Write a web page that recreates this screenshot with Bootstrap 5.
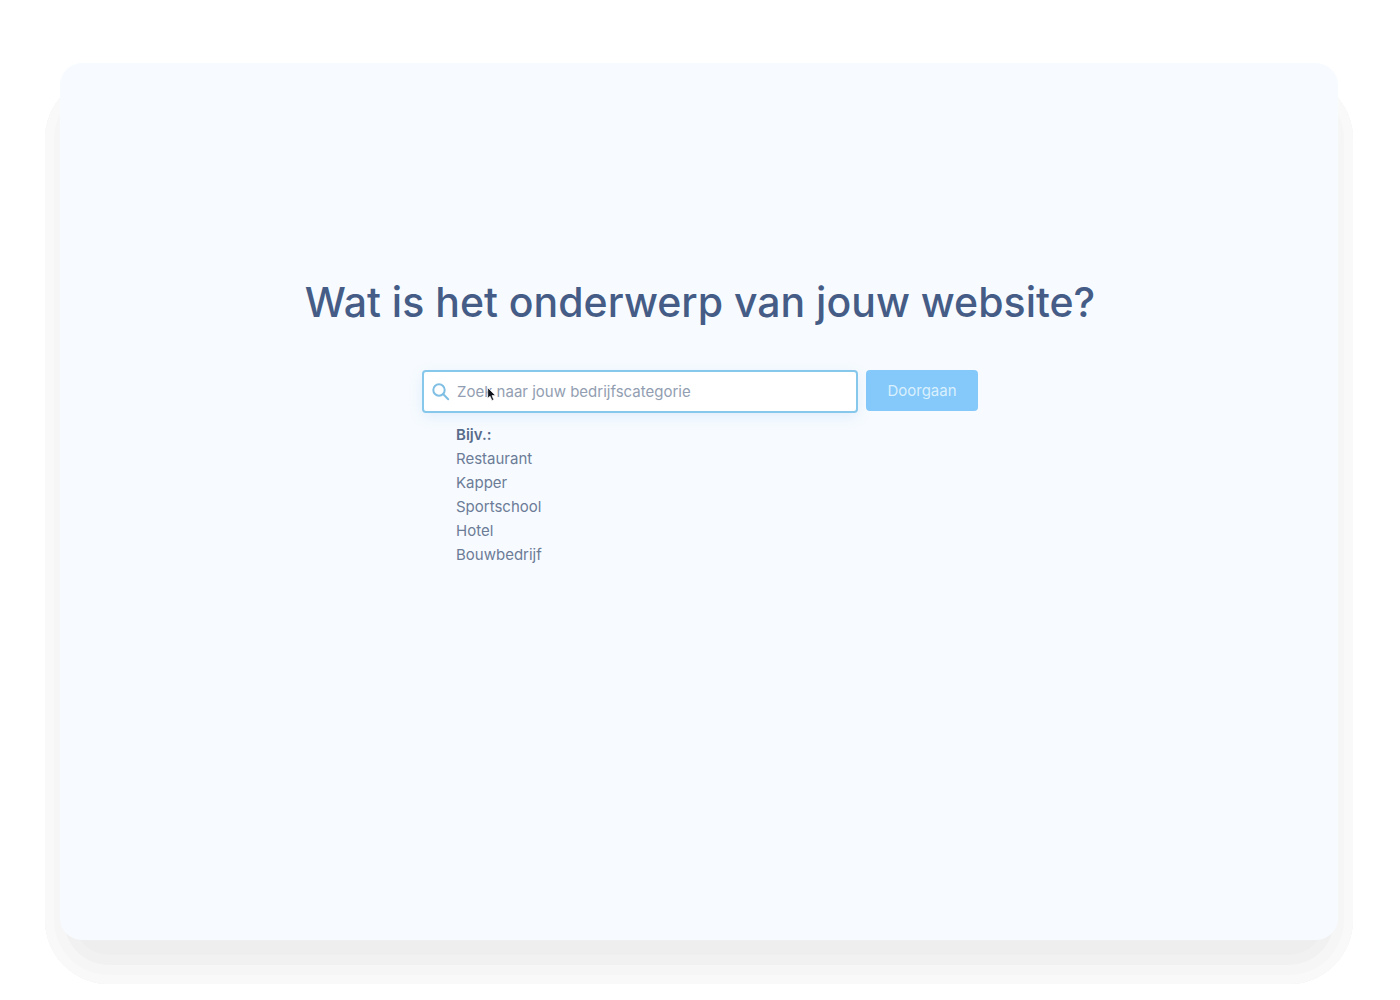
<!DOCTYPE html>
<html lang="nl">
<head>
<meta charset="utf-8">
<meta name="viewport" content="width=device-width, initial-scale=1">
<title>Wat is het onderwerp van jouw website?</title>
<link rel="stylesheet" href="https://cdn.jsdelivr.net/npm/bootstrap@5.3.0/dist/css/bootstrap.min.css">
<style>
body { font-family: Inter, "Liberation Sans", sans-serif; font-size: 15px; background: #fff; color: #6c7c97; }
.page-wrap { padding: 63px 62px 60px 60px; }
.panel { isolation: isolate; min-height: calc(100vh - 123px); }
/* stepped shadow below the panel */
.panel::before {
  content: ""; position: absolute; z-index: -2; inset: 12px -15px -44px; border-radius: 64px; background: #eee;
  box-shadow: inset 0 0 0 9px #f9f9f9, inset 0 0 0 19px #f6f6f6, inset 0 0 0 29px #f1f1f1;
}
.panel::after { content: ""; position: absolute; z-index: -1; inset: 0; border-radius: 22px; background: #f7fbff; }
.panel-inner { padding: 212px 14px 0 16px; }
h1 { font-size: 41px; line-height: 54px; font-weight: 500; color: #455d86; margin-bottom: 41px; }
.search-area { max-width: 556px; }
.search-box { height: 43px; border: 2px solid #86c7ec; border-radius: 4px; background: #fff; box-shadow: 0 4px 14px rgba(120, 170, 225, .16); padding-left: 8px; }
.search-box .form-control { font-size: 15px; color: #8d99ad; padding: 2px 7px 0; }
.search-box .form-control::placeholder { color: #929eb1; opacity: 1; }
.btn-go, .btn-go:hover { width: 112px; height: 41px; padding: 2px 0 0; font-size: 15px; color: #d9f0fd; background: #85c8fa; border: 0; border-radius: 4px; }
.pointer { left: 63px; top: 15px; pointer-events: none; }
.examples { padding: 10px 0 0 34px; line-height: 24px; }
.examples h2 { font-size: 15px; line-height: 24px; font-weight: 600; color: #596b8b; }
</style>
<script src="https://cdn.jsdelivr.net/npm/bootstrap@5.3.0/dist/js/bootstrap.bundle.min.js"></script>
</head>
<body>
<div class="page-wrap">
  <main class="panel position-relative">
    <div class="panel-inner">
      <h1 class="text-center">Wat is het onderwerp van jouw website?</h1>
      <div class="search-area mx-auto">
        <form class="d-flex gap-2">
          <div class="search-box d-flex align-items-center flex-grow-1 position-relative">
            <label for="category" class="d-flex" aria-label="Zoeken">
              <svg width="18" height="18" viewBox="0 0 18 18" fill="none" stroke="#7fbfe4" stroke-width="2" stroke-linecap="round"><circle cx="7" cy="7" r="5.7"/><path d="M11.3 11.3 16.2 16.2"/></svg>
            </label>
            <input id="category" type="text" class="form-control border-0 shadow-none bg-transparent" placeholder="Zoek naar jouw bedrijfscategorie">
            <svg class="pointer position-absolute" width="10" height="15" viewBox="0 0 10 15"><path d="M.7.7v10.6l2.4-2.1 1.8 4.3 1.9-.8L5 8.6h3.5z" fill="#10131b" stroke="#fff" stroke-width=".7"/></svg>
          </div>
          <button type="button" class="btn btn-go flex-shrink-0">Doorgaan</button>
        </form>
        <section class="examples">
          <h2 class="mb-0">Bijv.:</h2>
          <ul class="list-unstyled mb-0">
            <li>Restaurant</li>
            <li>Kapper</li>
            <li>Sportschool</li>
            <li>Hotel</li>
            <li>Bouwbedrijf</li>
          </ul>
        </section>
      </div>
    </div>
  </main>
</div>
</body>
</html>
